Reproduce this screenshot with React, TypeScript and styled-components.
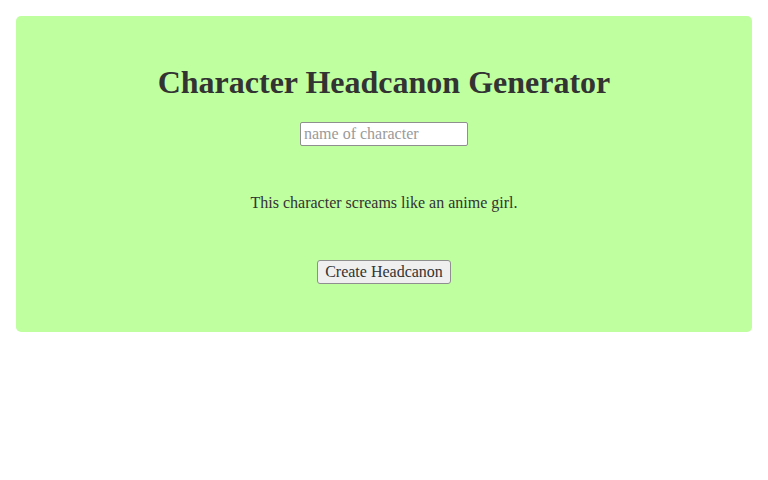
import React, {useState} from "react";
import styled, {createGlobalStyle} from "styled-components";

const GlobalStyle = createGlobalStyle`
    body {
        margin: 0;
        background: #ffffff;
        font-family: "Liberation Serif", "Times New Roman", serif;
    }
`;

const App: React.FC = () => {
    const [name, setName] = useState("");

    return (
        <Page>
            <GlobalStyle />
            <Card>
                <Title>Character Headcanon Generator</Title>
                <NameInput
                    type="text"
                    placeholder="name of character"
                    value={name}
                    onChange={e => setName(e.target.value)}
                />
                <Result>This character screams like an anime girl.</Result>
                <CreateButton type="button">Create Headcanon</CreateButton>
            </Card>
        </Page>
    );
};

export default App;


const Page = styled.div`
    padding: 16px;
`;

const Card = styled.div`
    display: flex;
    flex-direction: column;
    align-items: center;
    padding: 48px 16px;
    border-radius: 5px;
    background: #bfffa0;
    color: #333333;
`;

const Title = styled.h1`
    margin: 0 0 21px;
    font-size: 32px;
    line-height: 37px;
    font-weight: 700;
`;

const NameInput = styled.input`
    box-sizing: border-box;
    width: 168px;
    height: 24px;
    padding: 1px 3px;
    border: 1px solid #8f8f8f;
    border-radius: 2px;
    background: #ffffff;
    font-family: "Liberation Serif", "Times New Roman", serif;
    font-size: 16px;
    color: #333333;

    &::placeholder {
        color: #9a9a9a;
    }
`;

const Result = styled.p`
    margin: 48px 0 48px;
    font-size: 16px;
    line-height: 18px;
`;

const CreateButton = styled.button`
    box-sizing: border-box;
    height: 24px;
    padding: 1px 7px;
    border: 1px solid #8f8f8f;
    border-radius: 3px;
    background: #efefef;
    font-family: "Liberation Serif", "Times New Roman", serif;
    font-size: 16px;
    color: #333333;
`;
